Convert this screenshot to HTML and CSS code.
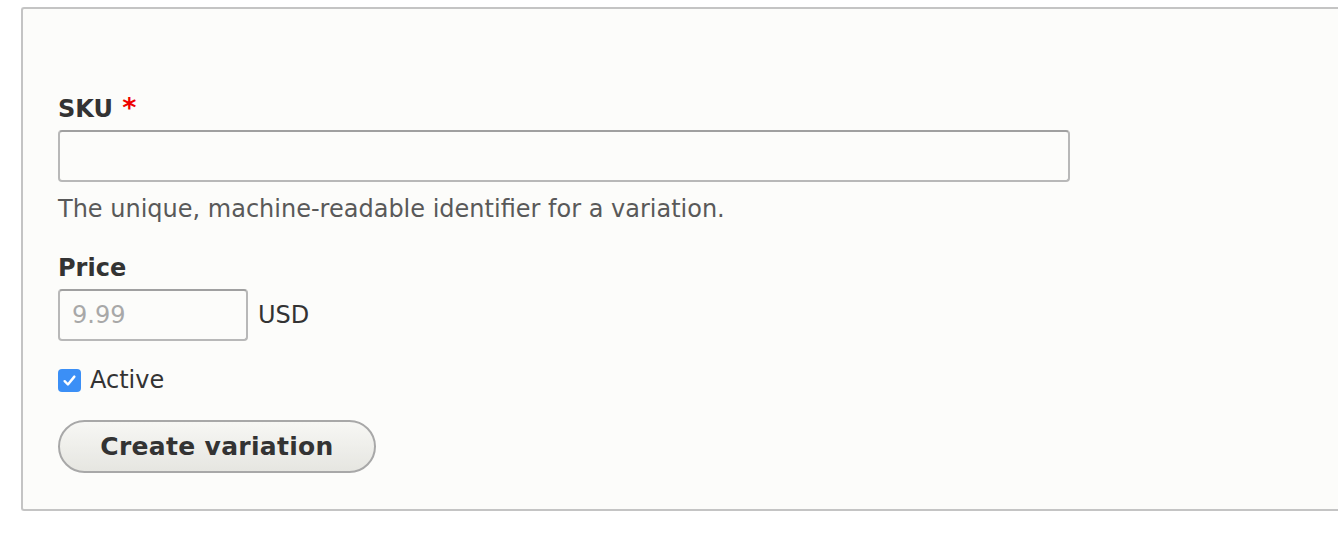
FILE: index.html
```html
<!DOCTYPE html>
<html lang="en">
<head>
    <meta charset="UTF-8">
    <title>Create variation</title>
    <link rel="stylesheet" href="styles.css">
</head>
<body>
    <div class="panel">
        <form class="variation-form">
            <div class="form-item">
                <label class="form-label" for="sku">SKU <span class="required">*</span></label>
                <input type="text" id="sku" class="form-text form-text-wide">
                <div class="description">The unique, machine-readable identifier for a variation.</div>
            </div>
            <div class="form-item form-item-price">
                <label class="form-label" for="price">Price</label>
                <div class="price-row">
                    <input type="text" id="price" class="form-text form-text-price" placeholder="9.99">
                    <span class="currency">USD</span>
                </div>
            </div>
            <div class="form-item form-checkbox">
                <span class="checkbox">
                    <svg width="17" height="17" viewBox="0 0 14 14"><path d="M3 7.6 L5.7 10.3 L11 3.8" fill="none" stroke="#fff" stroke-width="2" stroke-linecap="round" stroke-linejoin="round"/></svg>
                </span>
                <span class="checkbox-label">Active</span>
            </div>
            <button type="button" class="button">Create variation</button>
        </form>
    </div>
</body>
</html>
```

FILE: styles.css
```css
body {
    margin: 0;
    padding: 7px 0 0 21px;
    background: #fff;
    font-family: "DejaVu Sans", sans-serif;
    color: #333;
    overflow: hidden;
}
.panel {
    background: #fcfcfa;
    border: 2px solid #c4c4c4;
    border-right: none;
    border-radius: 3px 0 0 3px;
    height: 504px;
    box-sizing: border-box;
    padding: 86px 0 0 35px;
}
.form-item {
    margin-bottom: 31px;
}
.form-item-price {
    margin-bottom: 25px;
}
.form-label {
    display: block;
    font-weight: bold;
    font-size: 24px;
    line-height: 28px;
    height: 28px;
    margin-bottom: 7px;
}
.required {
    color: #e00;
    font-size: 27px;
    line-height: 0;
    margin-left: 1px;
}
.form-text {
    display: block;
    box-sizing: border-box;
    height: 52px;
    border: 2px solid #b8b8b8;
    border-top-color: #a0a0a0;
    border-radius: 4px;
    background: #fcfcfa;
    font-family: inherit;
    font-size: 24px;
    padding: 0 12px;
    color: #333;
}
.form-text-wide {
    width: 1012px;
}
.form-text-price {
    width: 190px;
}
.form-text::placeholder {
    color: #a8a8a8;
}
.description {
    font-size: 24px;
    line-height: 28px;
    color: #595959;
    margin-top: 13px;
}
.price-row {
    display: flex;
    align-items: center;
    gap: 10px;
}
.currency {
    font-size: 24px;
}
.form-checkbox {
    display: flex;
    align-items: center;
    gap: 9px;
    height: 28px;
    margin-bottom: 26px;
}
.checkbox {
    width: 23px;
    height: 23px;
    border-radius: 4px;
    background: #3b8ff6;
    display: flex;
    align-items: center;
    justify-content: center;
}
.checkbox-label {
    font-size: 24px;
    line-height: 28px;
}
.button {
    display: block;
    width: 318px;
    height: 53px;
    border: 2px solid #a8a8a8;
    border-radius: 27px;
    background: linear-gradient(#f7f7f4, #e6e6e1);
    font-family: inherit;
    font-weight: bold;
    font-size: 25px;
    color: #333;
    letter-spacing: 0.3px;
    cursor: pointer;
}
```
